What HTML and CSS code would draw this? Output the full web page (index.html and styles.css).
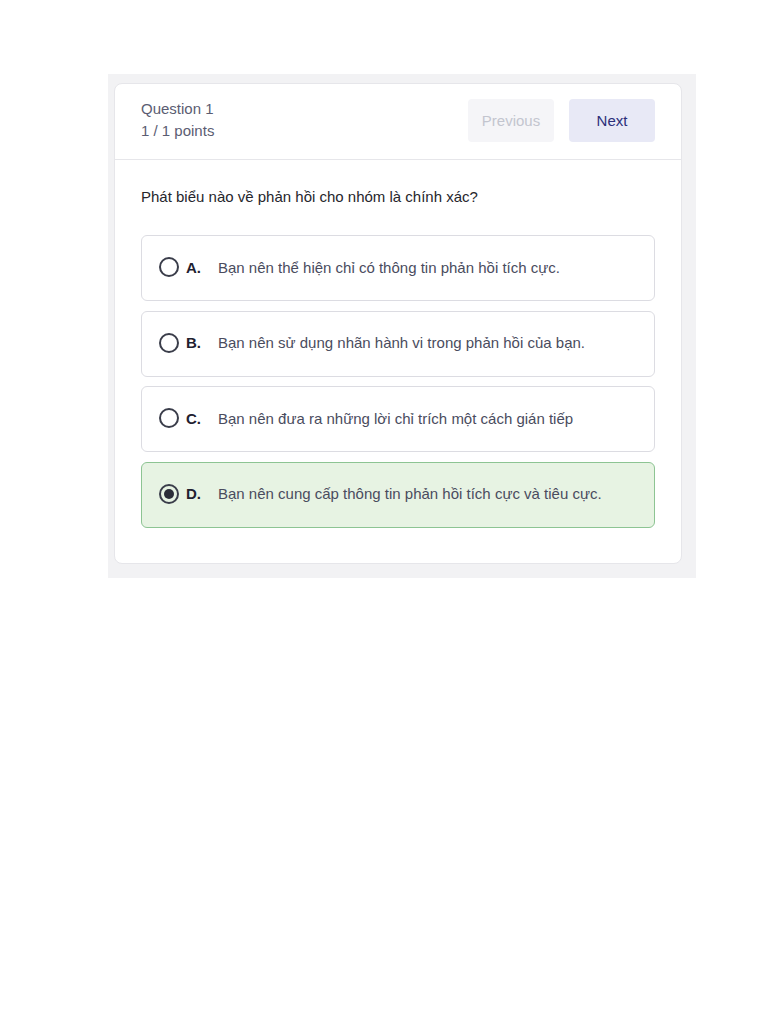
FILE: index.html
```html
<!DOCTYPE html>
<html lang="vi">
<head>
    <meta charset="UTF-8">
    <meta name="viewport" content="width=device-width, initial-scale=1.0">
    <title>Quiz</title>
    <link rel="stylesheet" href="styles.css">
</head>
<body>

<div class="frame">
    <div class="card">
        <div class="card-header">
            <div class="meta">
                <div>Question 1</div>
                <div>1 / 1 points</div>
            </div>
            <div class="nav">
                <button class="btn btn-prev" disabled>Previous</button>
                <button class="btn btn-next">Next</button>
            </div>
        </div>

        <div class="card-body">
            <p class="question">Phát biểu nào về phản hồi cho nhóm là chính xác?</p>

            <ul class="options">
                <li class="option">
                    <span class="radio"></span>
                    <span class="letter">A.</span>
                    <span class="text">Bạn nên thể hiện chỉ có thông tin phản hồi tích cực.</span>
                </li>
                <li class="option">
                    <span class="radio"></span>
                    <span class="letter">B.</span>
                    <span class="text">Bạn nên sử dụng nhãn hành vi trong phản hồi của bạn.</span>
                </li>
                <li class="option">
                    <span class="radio"></span>
                    <span class="letter">C.</span>
                    <span class="text">Bạn nên đưa ra những lời chỉ trích một cách gián tiếp</span>
                </li>
                <li class="option selected">
                    <span class="radio"></span>
                    <span class="letter">D.</span>
                    <span class="text">Bạn nên cung cấp thông tin phản hồi tích cực và tiêu cực.</span>
                </li>
            </ul>
        </div>
    </div>
</div>

</body>
</html>
```

FILE: styles.css
```css
body {
    font-family: "Liberation Sans", Arial, sans-serif;
    background-color: #fff;
    margin: 0;
    padding: 74px 0 0 108px;
}

.frame {
    width: 588px;
    background-color: #f2f2f4;
    padding: 9px 14px 14px 6px;
    box-sizing: border-box;
}

.card {
    background-color: #fff;
    border: 1px solid #e6e6ea;
    border-radius: 8px;
}

.card-header {
    display: flex;
    align-items: center;
    justify-content: space-between;
    padding: 15px 26px 17px 26px;
    border-bottom: 1px solid #e6e6ea;
}

.meta {
    color: #5b5d72;
    font-size: 15px;
    line-height: 22px;
    margin-top: -2px;
}

.nav {
    display: flex;
    gap: 15px;
}

.btn {
    width: 86px;
    height: 43px;
    border: none;
    border-radius: 4px;
    font-family: inherit;
    font-size: 15px;
}

.btn-prev {
    background-color: #f5f5f8;
    color: #c3c5cf;
}

.btn-next {
    background-color: #e8e9f6;
    color: #2c2f7a;
}

.card-body {
    padding: 27px 26px 35px 26px;
}

.question {
    margin: 0 0 28px 0;
    font-size: 15px;
    line-height: 20px;
    color: #26262c;
}

.options {
    list-style: none;
    margin: 0;
    padding: 0;
    display: flex;
    flex-direction: column;
    gap: 9.5px;
}

.option {
    display: flex;
    align-items: center;
    height: 66px;
    box-sizing: border-box;
    padding: 0 17px 2px 17px;
    border: 1px solid #dcdce2;
    border-radius: 6px;
    font-size: 15px;
    color: #4a4c5e;
}

.radio {
    width: 20px;
    height: 20px;
    box-sizing: border-box;
    border: 2.5px solid #3a3d4a;
    border-radius: 50%;
    display: flex;
    align-items: center;
    justify-content: center;
}

.letter {
    font-weight: bold;
    color: #1f2130;
    width: 32px;
    margin-left: 7px;
}

.option.selected {
    background-color: #e7f3e3;
    border-color: #8dc493;
}

.option.selected .radio::after {
    content: "";
    width: 10px;
    height: 10px;
    border-radius: 50%;
    background-color: #2b2d38;
}
```
